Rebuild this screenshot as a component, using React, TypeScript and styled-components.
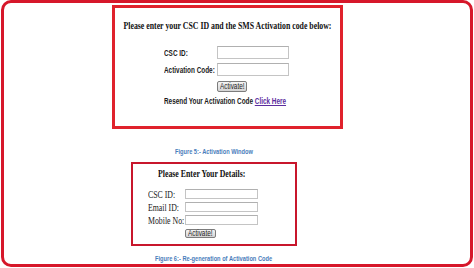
import { Fragment } from 'react';
import styled, { createGlobalStyle, css } from 'styled-components';

// the source screenshot is squeezed horizontally, so every text run is too
const SQUEEZE = 0.71;

const GlobalStyle = createGlobalStyle`
  html, body {
    margin: 0;
    padding: 0;
    background: #ffffff;
  }
  body {
    width: 474px;
    height: 268px;
    overflow: hidden;
  }
`;

const squeeze = (origin: string) => css`
  display: inline-block;
  white-space: nowrap;
  transform: scaleX(${SQUEEZE});
  transform-origin: ${origin};
`;

const Frame = styled.div`
  box-sizing: border-box;
  width: 472px;
  height: 267px;
  margin-left: 1px;
  border: 3px solid #d6172a;
  border-radius: 10px;
  display: flex;
  flex-direction: column;
  align-items: flex-start;
`;

const ActivationPanel = styled.section`
  box-sizing: border-box;
  width: 231px;
  height: 124px;
  margin: 2px 0 0 108px;
  border: 3px solid #e0222c;
  display: flex;
  flex-direction: column;
`;

const DetailsPanel = styled.section`
  box-sizing: border-box;
  width: 166px;
  height: 84px;
  margin: 5px 0 0 127px;
  border: 2px solid #c8162c;
  display: flex;
  flex-direction: column;
`;

const PanelTitle = styled.h2<{ $centered?: boolean; $pad: string }>`
  display: flex;
  justify-content: ${(p) => (p.$centered ? 'center' : 'flex-start')};
  margin: 0;
  padding: ${(p) => p.$pad};
  font-family: 'Liberation Serif', 'Times New Roman', serif;
  font-weight: bold;
  font-size: 11px;
  line-height: 12px;
  color: #111111;
`;

const TitleText = styled.span<{ $origin: string }>`
  ${(p) => squeeze(p.$origin)}
`;

const CodeForm = styled.div`
  display: grid;
  grid-template-columns: 53px 72px;
  grid-auto-rows: 13px;
  row-gap: 4px;
  align-items: center;
  margin: 15px 0 0 49px;
`;

const DetailsForm = styled.div`
  display: grid;
  grid-template-columns: 37px 73px;
  grid-auto-rows: 10px;
  row-gap: 3px;
  align-items: center;
  margin: 10px 0 0 15px;
`;

const BoldLabel = styled.label`
  font-family: 'Liberation Sans', Arial, sans-serif;
  font-weight: bold;
  font-size: 9px;
  line-height: 12px;
  color: #1a1a1a;
  span {
    ${squeeze('left center')}
  }
`;

const SerifLabel = styled.label`
  font-family: 'Liberation Serif', 'Times New Roman', serif;
  font-size: 11px;
  line-height: 10px;
  color: #1a1a1a;
  span {
    ${squeeze('left center')}
  }
`;

const Field = styled.input<{ $short?: boolean }>`
  box-sizing: border-box;
  width: 100%;
  height: ${(p) => (p.$short ? '10px' : '13px')};
  margin: 0;
  padding: 0;
  border: 1px solid #c4c4c4;
  border-top-color: #b0b0b0;
  background: #ffffff;
  outline: none;
`;

const ActivateButton = styled.button<{ $short?: boolean }>`
  grid-column: 2;
  box-sizing: border-box;
  width: ${(p) => (p.$short ? '31px' : '30px')};
  height: ${(p) => (p.$short ? '9px' : '11px')};
  padding: 0;
  display: flex;
  align-items: center;
  justify-content: center;
  overflow: visible;
  border: 1px solid #7c7c7c;
  border-radius: 2px;
  background: linear-gradient(#f4f4f4, #d4d4d4);
  font-family: 'Liberation Sans', Arial, sans-serif;
  font-size: 9px;
  line-height: 9px;
  color: #222222;
  span {
    ${squeeze('center')}
  }
`;

const ResendLine = styled.p`
  margin: 2px 0 0 49px;
  font-family: 'Liberation Sans', Arial, sans-serif;
  font-weight: bold;
  font-size: 9px;
  line-height: 12px;
  color: #1a1a1a;
  > span {
    ${squeeze('left center')}
  }
`;

const ResendLink = styled.a`
  color: #5b2d9e;
  text-decoration: underline;
`;

const FigureCaption = styled.p<{ $gap: number }>`
  display: flex;
  justify-content: center;
  width: 166px;
  margin: ${(p) => p.$gap}px 0 0 127px;
  font-family: 'Liberation Sans', Arial, sans-serif;
  font-weight: bold;
  font-size: 8px;
  line-height: 10px;
  color: #4a7dbb;
  span {
    ${squeeze('center')}
  }
`;

const codeFields = ['CSC ID:', 'Activation Code:'];
const detailFields = ['CSC ID:', 'Email ID:', 'Mobile No:'];

export default function App() {
  return (
    <>
      <GlobalStyle />
      <Frame>
        <ActivationPanel>
          <PanelTitle $centered $pad="11px 0 0">
            <TitleText $origin="center">
              Please enter your CSC ID and the SMS Activation code below:
            </TitleText>
          </PanelTitle>
          <CodeForm>
            {codeFields.map((f) => (
              <Fragment key={f}>
                <BoldLabel>
                  <span>{f}</span>
                </BoldLabel>
                <Field type="text" />
              </Fragment>
            ))}
            <ActivateButton>
              <span>Activate!</span>
            </ActivateButton>
          </CodeForm>
          <ResendLine>
            <span>
              Resend Your Activation Code <ResendLink href="#">Click Here</ResendLink>
            </span>
          </ResendLine>
        </ActivationPanel>

        <FigureCaption $gap={18}>
          <span>Figure 5:- Activation Window</span>
        </FigureCaption>

        <DetailsPanel>
          <PanelTitle $pad="3px 0 0 25px">
            <TitleText $origin="left center">Please Enter Your Details:</TitleText>
          </PanelTitle>
          <DetailsForm>
            {detailFields.map((f) => (
              <Fragment key={f}>
                <SerifLabel>
                  <span>{f}</span>
                </SerifLabel>
                <Field $short type="text" />
              </Fragment>
            ))}
            <ActivateButton $short>
              <span>Activate!</span>
            </ActivateButton>
          </DetailsForm>
        </DetailsPanel>

        <FigureCaption $gap={8}>
          <span>Figure 6:- Re-generation of Activation Code</span>
        </FigureCaption>
      </Frame>
    </>
  );
}
